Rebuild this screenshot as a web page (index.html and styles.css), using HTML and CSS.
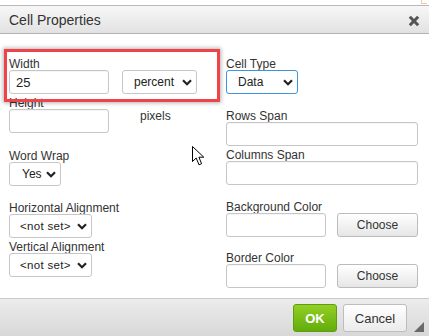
FILE: index.html
```html
<!DOCTYPE html>
<html>
<head>
    <title>Cell Properties</title>
    <link rel="stylesheet" href="styles.css">
</head>
<body>
    <div class="topgap"><span class="corner"></span></div>

    <div class="titlebar">
        <span class="title">Cell Properties</span>
        <svg class="close" width="12" height="12" viewBox="0 0 12 12">
            <path d="M1.8 1.8 L10.2 10.2 M10.2 1.8 L1.8 10.2" stroke="#555" stroke-width="3" fill="none"/>
        </svg>
    </div>

    <div class="content">
        <div class="col col-left">
            <label class="lbl first">Width</label>
            <div class="row">
                <input class="field w100" type="text" value="25">
                <div class="select sel-unit"><span>percent</span><svg class="chev" width="10" height="7" viewBox="0 0 10 7"><path d="M1 1.2 L5 5.2 L9 1.2" stroke="#222" stroke-width="2.2" fill="none"/></svg></div>
            </div>
            <label class="lbl">Height</label>
            <div class="row">
                <input class="field w100" type="text">
                <span class="unit">pixels</span>
            </div>
            <label class="lbl gap14">Word Wrap</label>
            <div class="select sel-yes"><span>Yes</span><svg class="chev" width="10" height="7" viewBox="0 0 10 7"><path d="M1 1.2 L5 5.2 L9 1.2" stroke="#222" stroke-width="2.2" fill="none"/></svg></div>
            <label class="lbl gap13">Horizontal Alignment</label>
            <div class="select sel-align"><span class="small">&lt;not set&gt;</span><svg class="chev" width="10" height="7" viewBox="0 0 10 7"><path d="M1 1.2 L5 5.2 L9 1.2" stroke="#222" stroke-width="2.2" fill="none"/></svg></div>
            <label class="lbl">Vertical Alignment</label>
            <div class="select sel-align"><span class="small">&lt;not set&gt;</span><svg class="chev" width="10" height="7" viewBox="0 0 10 7"><path d="M1 1.2 L5 5.2 L9 1.2" stroke="#222" stroke-width="2.2" fill="none"/></svg></div>
        </div>

        <div class="col col-right">
            <label class="lbl first">Cell Type</label>
            <div class="select sel-type"><span>Data</span><svg class="chev" width="10" height="7" viewBox="0 0 10 7"><path d="M1 1.2 L5 5.2 L9 1.2" stroke="#222" stroke-width="2.2" fill="none"/></svg></div>
            <label class="lbl gap13">Rows Span</label>
            <input class="field wide" type="text">
            <label class="lbl">Columns Span</label>
            <input class="field wide" type="text">
            <label class="lbl gap13">Background Color</label>
            <div class="row">
                <input class="field w100" type="text">
                <button class="btn choose">Choose</button>
            </div>
            <label class="lbl gap12">Border Color</label>
            <div class="row">
                <input class="field w100" type="text">
                <button class="btn choose">Choose</button>
            </div>
        </div>
    </div>

    <div class="footer">
        <button class="btn ok">OK</button>
        <button class="btn cancel">Cancel</button>
        <span class="grip"></span>
    </div>

    <div class="highlight"></div>

    <svg class="cursor" width="13" height="20" viewBox="0 0 13 20">
        <path d="M0.5 0.5 L0.5 15.5 L4.2 12 L7 18.8 L9.6 17.7 L6.9 11.2 L11.8 11.2 Z" fill="#fff" stroke="#000" stroke-width="1"/>
    </svg>
</body>
</html>
```

FILE: styles.css
```css
body { margin: 0; width: 429px; height: 336px; overflow: hidden; background: #fff; font-family: "Liberation Sans", Arial, sans-serif; color: #333; display: flex; flex-direction: column; position: relative; }

.topgap { height: 5px; position: relative; }
.corner { position: absolute; right: 2px; top: -2px; width: 5px; height: 5px; border-left: 1px solid #f0c9a6; border-bottom: 1px solid #f0c9a6; }

.titlebar { height: 27px; border-top: 1px solid #b9b9b9; border-bottom: 1px solid #b3b3b3; background: linear-gradient(#f7f7f7, #e2e2e2); display: flex; align-items: center; justify-content: space-between; padding: 0 9px 0 9px; }
.title { font-size: 14px; color: #333; margin-top: 1px; }
.close { display: block; margin-top: 2px; }

.content { flex: 1; display: flex; padding-left: 9px; }
.col { display: flex; flex-direction: column; align-items: flex-start; }
.col-left { width: 217px; }
.col-right { width: 192px; }

.lbl { display: block; font-size: 12px; line-height: 18px; height: 15px; color: #333; }
.lbl.first { margin-top: 21px; }
.gap12 { margin-top: 12px; }
.gap13 { margin-top: 13px; }
.gap14 { margin-top: 14px; }

.row { display: flex; align-items: flex-start; }

.field { box-sizing: border-box; height: 24px; margin: 0; border: 1px solid #c6c6c6; border-radius: 3px; padding: 0 6px; font-family: "Liberation Sans", Arial, sans-serif; font-size: 13px; color: #222; background: #fff; box-shadow: inset 0 1px 1px rgba(0,0,0,0.04); }
.w100 { width: 100px; }
.wide { width: 192px; }

.select { box-sizing: border-box; height: 24px; display: flex; align-items: center; justify-content: space-between; border: 1px solid #c6c6c6; border-radius: 3px; background: #fff; font-size: 12px; color: #222; padding: 0 4px 0 11px; }
.select .small { font-size: 11.5px; letter-spacing: 0.3px; }
.chev { display: block; }
.sel-unit { width: 75px; margin-left: 13px; }
.sel-yes { width: 52px; padding-left: 12px; }
.sel-align { width: 83px; padding-left: 10px; }
.sel-type { width: 72px; border-color: #3d94dc; }

.unit { font-size: 12px; margin-left: 31px; line-height: 15px; }

.btn { box-sizing: border-box; margin: 0; font-family: "Liberation Sans", Arial, sans-serif; border-radius: 3px; cursor: pointer; padding: 0; }
.choose { width: 81px; height: 24px; margin-left: 11px; border: 1px solid #bcbcbc; background: linear-gradient(#ffffff, #e6e6e6); font-size: 12px; color: #333; }

.footer { border-top: 1px solid #c9c9c9; background: linear-gradient(#ececec, #d8d8d8); display: flex; align-items: flex-start; justify-content: flex-end; padding: 5px 22px 0 0; box-sizing: border-box; height: 38px; position: relative; }
.ok { width: 44px; height: 28px; border: 1px solid #5f9d12; background: linear-gradient(#93d024, #62ac0c); color: #fff; font-size: 13px; font-weight: bold; }
.cancel { width: 64px; height: 28px; margin-left: 6px; border: 1px solid #bdbdbd; background: linear-gradient(#ffffff, #ebebeb); color: #333; font-size: 13px; }
.grip { position: absolute; right: 5px; bottom: 4px; width: 0; height: 0; border-left: 10px solid transparent; border-bottom: 10px solid #6a6a6a; }

.highlight { position: absolute; left: 4px; top: 49px; width: 216px; height: 53px; box-sizing: border-box; border: 3px solid #ef4249; box-shadow: 0 0 4px 1px rgba(0,0,0,0.3); }
.cursor { position: absolute; left: 192px; top: 146px; }
```
